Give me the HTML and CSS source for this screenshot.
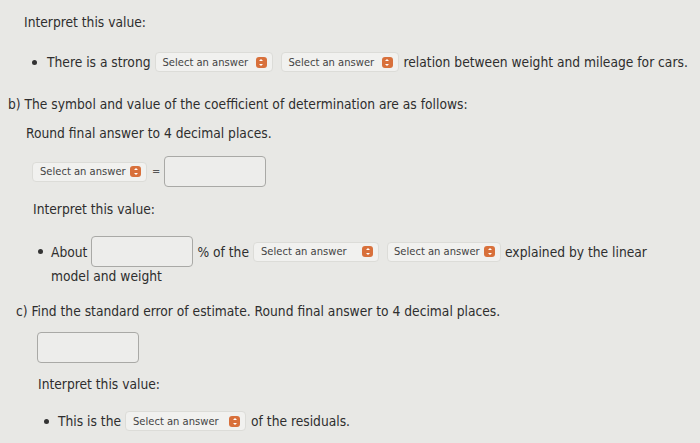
FILE: index.html
```html
<!DOCTYPE html>
<html>
<head>
<meta charset="utf-8">
<link rel="stylesheet" href="styles.css">
</head>
<body>
<div class="page">
  <p class="line interp1">Interpret this value:</p>
  <div class="bullet-row row1">
    <span class="dot"></span>
    <span>There is a strong</span>
    <span class="sel s1">Select an answer<i class="arr"></i></span>
    <span class="sel s2">Select an answer<i class="arr"></i></span>
    <span class="tail">relation between weight and mileage for cars.</span>
  </div>

  <p class="line partb">b) The symbol and value of the coefficient of determination are as follows:</p>
  <p class="line round">Round final answer to 4 decimal places.</p>

  <div class="eq-row">
    <span class="sel s3">Select an answer<i class="arr"></i></span>
    <span class="eq">=</span>
    <span class="box"></span>
  </div>

  <p class="line interp2">Interpret this value:</p>
  <div class="bullet-row row2">
    <span class="dot"></span>
    <div class="wrap">
      <div class="wrap-line">
        <span>About</span>
        <span class="box b2"></span>
        <span>% of the</span>
        <span class="sel s4">Select an answer<i class="arr"></i></span>
        <span class="sel s5">Select an answer<i class="arr"></i></span>
        <span>explained by the linear</span>
      </div>
      <div class="cont">model and weight</div>
    </div>
  </div>

  <p class="line partc">c) Find the standard error of estimate. Round final answer to 4 decimal places.</p>
  <span class="box b3"></span>
  <p class="line interp3">Interpret this value:</p>
  <div class="bullet-row row3">
    <span class="dot"></span>
    <span>This is the</span>
    <span class="sel s6">Select an answer<i class="arr"></i></span>
    <span>of the residuals.</span>
  </div>
</div>
</body>
</html>
```

FILE: styles.css
```css
html, body {
  margin: 0;
  padding: 0;
  background: #e8e8e5;
}
body {
  width: 700px;
  height: 443px;
  overflow: hidden;
  font-family: "DejaVu Sans Condensed", "DejaVu Sans", sans-serif;
  font-size: 13.7px;
  color: #2e2e2e;
}
.page {
  display: flex;
  flex-direction: column;
  align-items: flex-start;
  padding-top: 13px;
}
.line {
  margin: 0;
  line-height: 18px;
  white-space: nowrap;
}
.interp1 { margin-left: 24px; }
.bullet-row {
  display: flex;
  align-items: center;
  white-space: nowrap;
}
.dot {
  width: 5px;
  height: 5px;
  border-radius: 50%;
  background: #333;
  flex: none;
}
.row1 { margin-left: 32px; margin-top: 21px; gap: 4px; }
.row1 .dot { margin-right: 6px; }
.sel {
  display: inline-flex;
  align-items: center;
  justify-content: space-between;
  box-sizing: border-box;
  height: 20px;
  padding: 0 5px 0 7px;
  background: #f1f1ef;
  border: 1px solid #dcdcd8;
  border-radius: 4px;
  font-family: "DejaVu Sans Condensed", "DejaVu Sans", sans-serif;
  font-size: 11.1px;
  color: #444;
}
.arr {
  width: 11px;
  height: 11px;
  border-radius: 3px;
  background: #d8703b;
  position: relative;
  flex: none;
}
.arr::before, .arr::after {
  content: "";
  position: absolute;
  left: 3.5px;
  width: 0;
  height: 0;
  border-left: 2px solid transparent;
  border-right: 2px solid transparent;
}
.arr::before { top: 2px; border-bottom: 2.5px solid #fff; }
.arr::after { bottom: 2px; border-top: 2.5px solid #fff; }
.s1 { width: 118px; }
.s2 { width: 118px; margin-left: 4px; }
.tail { margin-left: 1px; }
.partb { margin-left: 8px; margin-top: 23px; }
.round { margin-left: 26px; margin-top: 11px; }
.eq-row {
  display: flex;
  align-items: center;
  margin-left: 32px;
  margin-top: 14px;
}
.s3 { width: 115px; }
.eq { margin: 0 4px 0 5px; font-size: 11px; color: #555; }
.box {
  display: block;
  box-sizing: border-box;
  width: 102px;
  height: 31px;
  border: 1.5px solid #a9a9a6;
  border-radius: 4px;
  background: #ededeb;
}
.interp2 { margin-left: 33px; margin-top: 13px; }
.row2 { margin-left: 38px; margin-top: 18px; align-items: flex-start; }
.row2 .dot { margin-top: 13px; margin-right: 8px; }
.wrap { display: flex; flex-direction: column; }
.wrap-line { display: flex; align-items: center; gap: 4px; white-space: nowrap; }
.b2 { margin: 0; }
.s4 { width: 126px; margin-left: 0; }
.s5 { width: 114px; margin-left: 4px; padding-left: 6px; }
.cont { line-height: 18px; margin-top: 0; }
.partc { margin-left: 16px; margin-top: 17px; }
.b3 { margin-left: 37px; margin-top: 12px; }
.interp3 { margin-left: 38px; margin-top: 12px; }
.row3 { margin-left: 44px; margin-top: 18px; gap: 4px; }
.row3 .dot { margin-right: 5px; }
.s6 { width: 121px; margin-left: 0; }
.row3 > span:last-child { margin-left: 1px; }
```
